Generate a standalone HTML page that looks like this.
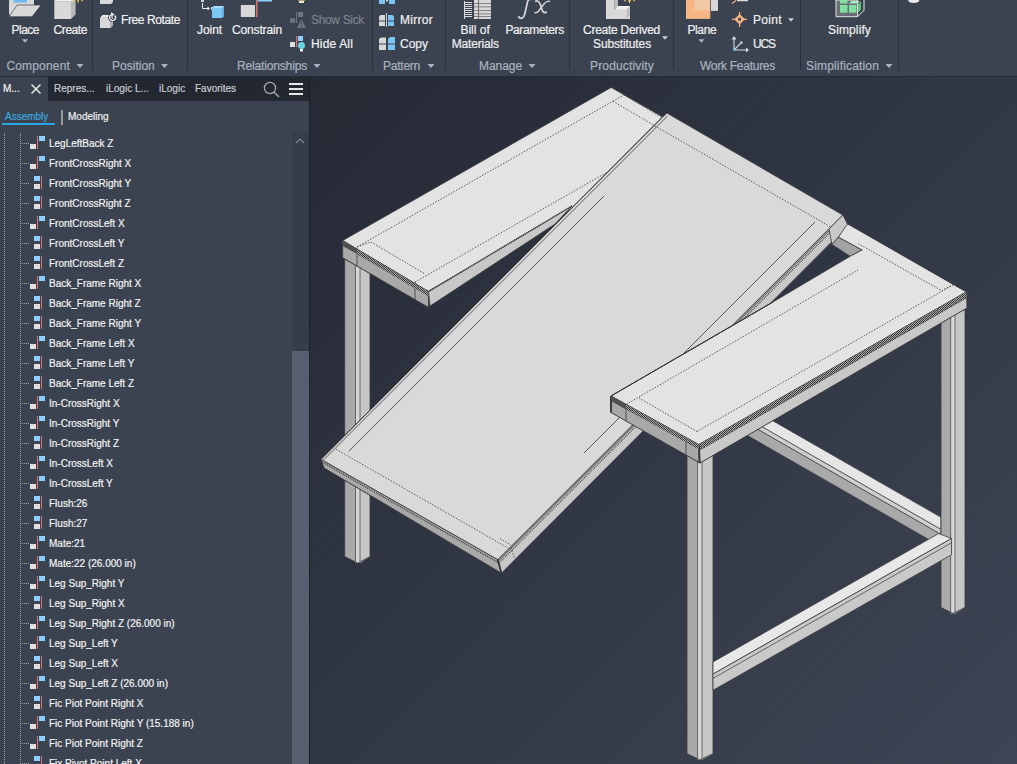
<!DOCTYPE html>
<html><head><meta charset="utf-8"><style>
html,body{margin:0;padding:0;width:1017px;height:764px;overflow:hidden;background:#3b4351;font-family:"Liberation Sans", sans-serif;}
.r{position:absolute;}
.t{position:absolute;white-space:nowrap;font-family:"Liberation Sans", sans-serif;-webkit-text-stroke:0.2px currentColor;}
</style></head><body>
<div class="r" style="left:0px;top:0px;width:1017px;height:76px;background:#3b4351;"></div><div class="r" style="left:0px;top:76px;width:1017px;height:1px;background:#262b33;"></div><div class="r" style="left:92px;top:0px;width:1px;height:70px;background:#2b313b;"></div><div class="r" style="left:187px;top:0px;width:1px;height:70px;background:#2b313b;"></div><div class="r" style="left:372px;top:0px;width:1px;height:70px;background:#2b313b;"></div><div class="r" style="left:445px;top:0px;width:1px;height:70px;background:#2b313b;"></div><div class="r" style="left:569px;top:0px;width:1px;height:70px;background:#2b313b;"></div><div class="r" style="left:673px;top:0px;width:1px;height:70px;background:#2b313b;"></div><div class="r" style="left:800px;top:0px;width:1px;height:70px;background:#2b313b;"></div><div class="r" style="left:898px;top:0px;width:1px;height:70px;background:#2b313b;"></div><div class="t" style="left:11.6px;top:23.84px;font-size:12px;line-height:12px;color:#f0f0f0;letter-spacing:-0.523px;">Place</div><div class="t" style="left:53.6px;top:23.84px;font-size:12px;line-height:12px;color:#f0f0f0;letter-spacing:-0.436px;">Create</div><div class="t" style="left:6.4px;top:59.84px;font-size:12px;line-height:12px;color:#aab2bf;letter-spacing:0.174px;">Component</div><div class="t" style="left:121px;top:13.84px;font-size:12px;line-height:12px;color:#f0f0f0;letter-spacing:-0.396px;">Free Rotate</div><div class="t" style="left:112px;top:59.84px;font-size:12px;line-height:12px;color:#aab2bf;letter-spacing:0.014px;">Position</div><div class="t" style="left:197px;top:23.84px;font-size:12px;line-height:12px;color:#f0f0f0;letter-spacing:-0.069px;">Joint</div><div class="t" style="left:232px;top:23.84px;font-size:12px;line-height:12px;color:#f0f0f0;letter-spacing:-0.150px;">Constrain</div><div class="t" style="left:311px;top:13.84px;font-size:12px;line-height:12px;color:#7b818b;letter-spacing:-0.336px;">Show Sick</div><div class="t" style="left:311px;top:37.84px;font-size:12px;line-height:12px;color:#f0f0f0;letter-spacing:0.164px;">Hide All</div><div class="t" style="left:237px;top:59.84px;font-size:12px;line-height:12px;color:#aab2bf;letter-spacing:-0.157px;">Relationships</div><div class="t" style="left:400px;top:13.84px;font-size:12px;line-height:12px;color:#f0f0f0;letter-spacing:0.280px;">Mirror</div><div class="t" style="left:400px;top:37.84px;font-size:12px;line-height:12px;color:#f0f0f0;letter-spacing:-0.003px;">Copy</div><div class="t" style="left:383px;top:59.84px;font-size:12px;line-height:12px;color:#aab2bf;letter-spacing:-0.241px;">Pattern</div><div class="t" style="left:460.4px;top:23.84px;font-size:12px;line-height:12px;color:#f0f0f0;letter-spacing:0.008px;">Bill of</div><div class="t" style="left:451.7px;top:38.44px;font-size:12px;line-height:12px;color:#f0f0f0;letter-spacing:-0.164px;">Materials</div><div class="t" style="left:505.4px;top:23.84px;font-size:12px;line-height:12px;color:#f0f0f0;letter-spacing:-0.352px;">Parameters</div><div class="t" style="left:479px;top:59.84px;font-size:12px;line-height:12px;color:#aab2bf;letter-spacing:-0.060px;">Manage</div><div class="t" style="left:583px;top:23.84px;font-size:12px;line-height:12px;color:#f0f0f0;letter-spacing:-0.264px;">Create Derived</div><div class="t" style="left:593px;top:38.44px;font-size:12px;line-height:12px;color:#f0f0f0;letter-spacing:-0.124px;">Substitutes</div><div class="t" style="left:590px;top:59.84px;font-size:12px;line-height:12px;color:#aab2bf;letter-spacing:0.165px;">Productivity</div><div class="t" style="left:687.5px;top:23.84px;font-size:12px;line-height:12px;color:#f0f0f0;letter-spacing:-0.398px;">Plane</div><div class="t" style="left:753px;top:13.84px;font-size:12px;line-height:12px;color:#f0f0f0;letter-spacing:0.330px;">Point</div><div class="t" style="left:753px;top:37.84px;font-size:12px;line-height:12px;color:#f0f0f0;letter-spacing:-1.112px;">UCS</div><div class="t" style="left:700px;top:59.84px;font-size:12px;line-height:12px;color:#aab2bf;letter-spacing:-0.266px;">Work Features</div><div class="t" style="left:828px;top:23.84px;font-size:12px;line-height:12px;color:#f0f0f0;letter-spacing:0.124px;">Simplify</div><div class="t" style="left:806px;top:59.84px;font-size:12px;line-height:12px;color:#aab2bf;letter-spacing:0.165px;">Simplification</div><svg class="r" style="left:0;top:0" width="1017" height="76"><path d="M76.5 64.0L83.5 64.0L80 68.0Z" fill="#a9b3c4"/><path d="M161.0 64.0L168.0 64.0L164.5 68.0Z" fill="#a9b3c4"/><path d="M313.5 64.0L320.5 64.0L317 68.0Z" fill="#a9b3c4"/><path d="M427.5 64.0L434.5 64.0L431 68.0Z" fill="#a9b3c4"/><path d="M528.5 64.0L535.5 64.0L532 68.0Z" fill="#a9b3c4"/><path d="M885.5 64.0L892.5 64.0L889 68.0Z" fill="#a9b3c4"/><path d="M22.0 39.25L28.0 39.25L25 42.75Z" fill="#a9b3c4"/><path d="M698.4 39.25L704.4 39.25L701.4 42.75Z" fill="#a9b3c4"/><path d="M662.0 36.25L668.0 36.25L665 39.75Z" fill="#c8ccd2"/><path d="M788.0 18.25L794.0 18.25L791 21.75Z" fill="#c8ccd2"/><rect x="9" y="0" width="25" height="14.5" fill="#d6d6d6"/><rect x="13.4" y="0" width="13.6" height="2.5" fill="#6fb8ef"/><path d="M9 16.7L17.2 5L41.2 5L32 16.7Z" fill="#d8d8d8" stroke="#2e333c" stroke-width="0.6"/><path d="M54.3 1.8L71 1.8L71 19L54.3 19Z" fill="#d8d8d8"/><path d="M71 1.8L75.6 -2L75.6 14.5L71 19Z" fill="#b8b8b8"/><path d="M54.3 0L75 0L71 1.8L54.3 1.8Z" fill="#eeeeee"/><path d="M73 0L74 3L75 0ZM77 0L78 4L79 0ZM81 0L82 2L83 0Z" fill="#e8c060"/><path d="M100 0L111 0L113 0L113 2L111 4L100 4Z" fill="#d8d8d8"/><path d="M100 17.7L102.5 15L113 15L110.7 17.7Z" fill="#ececec"/><rect x="100" y="17.7" width="10.7" height="10.3" fill="#d8d8d8"/><path d="M110.7 17.7L113 15L113 25.5L110.7 28Z" fill="#b0b0b0"/><path d="M114.8 15.5A3 3 0 1 1 112 14.6" fill="none" stroke="#3b4351" stroke-width="3"/><path d="M114.8 15.5A3 3 0 1 1 112 14.6" fill="none" stroke="#f4f4f4" stroke-width="1.3"/><path d="M111 12.3L114.5 14.2L111.5 16.5Z" fill="#f4f4f4"/><rect x="201" y="0" width="3" height="2" fill="#d0d0d0"/><path d="M202.5 3L202.5 8.5L208 8.5" fill="none" stroke="#eeeeee" stroke-width="1"/><path d="M207.5 6.5L210 8.5L207.5 10.5Z" fill="#eeeeee"/><rect x="211" y="7" width="3" height="3" fill="#cccccc"/><path d="M212 8L214 6L224 6L224 16L222 18L212 18Z" fill="#7cc6f6"/><path d="M214 6L224 6L222 8L212 8Z" fill="#a8dcfc"/><path d="M222 8L224 6L224 16L222 18Z" fill="#62acdc"/><rect x="240.8" y="5" width="14.2" height="12" fill="#d8d8d8"/><rect x="256" y="0" width="1.5" height="17" fill="#e2716b"/><rect x="257.7" y="0" width="14.2" height="1.5" fill="#8ccfff"/><rect x="299" y="0" width="5" height="3" fill="#e8e8e8"/><rect x="298" y="0" width="7" height="1" fill="#b89a58"/><rect x="290" y="18.2" width="5" height="4.7" fill="#6e737c"/><rect x="296" y="12" width="1" height="11" fill="#6e737c"/><rect x="298" y="12" width="5" height="5" fill="#6e737c"/><path d="M297 28L301.5 19L306 28Z" fill="#6e737c"/><rect x="301" y="22" width="1" height="3" fill="#3b4351"/><rect x="301" y="26" width="1" height="1" fill="#3b4351"/><rect x="290" y="42" width="5" height="5" fill="#e0e0e0"/><rect x="296" y="36" width="1.2" height="11" fill="#e2716b"/><rect x="298" y="36" width="5" height="5" fill="#8ccfff"/><circle cx="301.5" cy="45.5" r="3.5" fill="#66d4e0"/><rect x="300" y="49" width="3" height="2.5" fill="#eeeeee"/><rect x="379" y="0" width="6" height="4" fill="#7cc6f6"/><rect x="389" y="0" width="6" height="4" fill="#7cc6f6"/><rect x="386" y="0" width="2" height="1.5" fill="#e0e0e0"/><path d="M379 16.5L380.5 15L385 15L385 26L379 26Z" fill="#d8d8d8"/><rect x="379" y="20.5" width="6" height="1" fill="#3b4351"/><rect x="386" y="13" width="1" height="14" fill="#d0d0d0"/><path d="M388 15L392.5 15L394 16.5L394 26L388 26Z" fill="#7cc6f6"/><rect x="388" y="20.5" width="6" height="1" fill="#3b4351"/><path d="M379 39L381 37.5L386 37.5L386 50L379 50Z" fill="#d8d8d8"/><rect x="379" y="43.5" width="7" height="1" fill="#3b4351"/><path d="M388 39L390 37L395 37L395 50L388 50Z" fill="#7cc6f6"/><rect x="388" y="43.5" width="7" height="1" fill="#3b4351"/><rect x="464" y="1" width="1" height="18" fill="#d8d8d8"/><rect x="464" y="2" width="8" height="1" fill="#d8d8d8"/><rect x="464" y="4" width="8" height="1" fill="#d8d8d8"/><rect x="464" y="6" width="8" height="1" fill="#d8d8d8"/><rect x="464" y="8" width="8" height="1" fill="#d8d8d8"/><rect x="464" y="10" width="8" height="1" fill="#d8d8d8"/><rect x="464" y="12" width="8" height="1" fill="#d8d8d8"/><rect x="464" y="14" width="8" height="1" fill="#d8d8d8"/><rect x="464" y="16" width="8" height="1" fill="#d8d8d8"/><rect x="474" y="0" width="17" height="19" fill="#d8d8d8"/><rect x="478" y="0" width="1" height="19" fill="#6c6c6c"/><rect x="474" y="3" width="17" height="0.8" fill="#6c6c6c"/><rect x="474" y="6.5" width="17" height="0.8" fill="#6c6c6c"/><rect x="474" y="10" width="17" height="0.8" fill="#6c6c6c"/><rect x="474" y="13.5" width="17" height="0.8" fill="#6c6c6c"/><rect x="474" y="16" width="17" height="0.8" fill="#6c6c6c"/><path d="M518.5 16.2Q520 19.8 523 17.5Q524.5 16 525.5 11L527.5 2Q528.5 -1.5 531.5 -0.5" fill="none" stroke="#d6d6d6" stroke-width="1.7"/><path d="M535 1.5Q538.5 -0.5 540.5 5L542.5 11Q544 13.5 547 12" fill="none" stroke="#d6d6d6" stroke-width="1.7"/><path d="M550 1.5Q547 0 543.5 4.5L539 10.5Q537 13.5 534.5 12.5" fill="none" stroke="#d6d6d6" stroke-width="1.4"/><path d="M606 0L614.6 0L614.6 9.5L630 6L630 19L606 19Z" fill="#d8d8d8"/><path d="M614.6 0L618 0L618 6.5L614.6 9.5Z" fill="#bcbcbc"/><path d="M614.6 9.5L618 6L630 6L626.5 9.5Z" fill="#f0f0f0"/><path d="M626.5 9.5L630 6L630 15.5L626.5 19Z" fill="#c0c0c0"/><path d="M624 0L625 2L626 0ZM628 0L629.5 4L631 0ZM633 0L634 2L635 0Z" fill="#f0c060"/><rect x="686" y="0" width="24.3" height="18.9" fill="#f5b584"/><rect x="694.2" y="0" width="15.8" height="10.2" fill="#f0c8a4"/><rect x="711" y="0" width="7" height="10.9" fill="#d8d8d8"/><path d="M732 3.5L736 0.5" stroke="#f5b584" stroke-width="1.2"/><rect x="737" y="0" width="11" height="1.2" fill="#e0e0e0"/><path d="M739.6 14L745 19.3L739.6 24.6L734.2 19.3Z" fill="#f5b584"/><path d="M732 19.3L747 19.3M739.6 12L739.6 27" stroke="#f5b584" stroke-width="1.2"/><rect x="738.2" y="17.9" width="2.8" height="2.8" fill="#3b4351"/><path d="M734 50L734 38M734 50L747 50M734 50L741 43" stroke="#d8d8d8" stroke-width="1.1" fill="none"/><path d="M731.5 39.5L734 36L736.5 39.5Z M746 47.5L749 50L746 52.5Z M739.5 41.5L742.5 41.5L742.5 44.5Z" fill="#d8d8d8"/><rect x="733" y="49" width="2" height="2" fill="#52b4f0"/><path d="M836 0L857.5 0L857.5 16.7L836 16.7Z" fill="#696d75" stroke="#e4e4e4" stroke-width="1"/><path d="M857.5 16.7L864 10.5L864 0" fill="none" stroke="#e4e4e4" stroke-width="1"/><rect x="840" y="0" width="7.5" height="3.5" fill="#80e0a2"/><rect x="840" y="5" width="7.5" height="7.7" fill="#80e0a2"/><rect x="849" y="5" width="7.3" height="7.7" fill="#80e0a2"/><path d="M849 3.5L851.5 1L860 1L857.5 3.5Z" fill="#a8ecbf"/><path d="M858 4L861 1.5L861 10L858 12.5Z" fill="#5cc07e"/><path d="M908 0L919.5 0A5.8 3.5 0 0 1 908 0Z" fill="#e8e8e8"/></svg><div class="r" style="left:0px;top:77px;width:309px;height:687px;background:#3b4351;"></div><div class="r" style="left:48px;top:77px;width:261px;height:24px;background:#222730;"></div><div class="r" style="left:309px;top:77px;width:1px;height:687px;background:#1c2027;"></div><div class="t" style="left:3px;top:83.53px;font-size:10px;line-height:10px;color:#f0f0f0;">M...</div><svg class="r" style="left:30px;top:83px" width="12" height="12"><path d="M1.5 1.5L10.5 10.5M10.5 1.5L1.5 10.5" stroke="#e8e8e8" stroke-width="1.5"/></svg><div class="t" style="left:54px;top:83.53px;font-size:10px;line-height:10px;color:#c8ccd2;">Repres...</div><div class="t" style="left:106px;top:83.53px;font-size:10px;line-height:10px;color:#c8ccd2;">iLogic L...</div><div class="t" style="left:159px;top:83.53px;font-size:10px;line-height:10px;color:#c8ccd2;">iLogic</div><div class="t" style="left:195px;top:83.53px;font-size:10px;line-height:10px;color:#c8ccd2;">Favorites</div><svg class="r" style="left:262px;top:80px" width="18" height="18"><circle cx="8" cy="8" r="5.6" fill="none" stroke="#a8a8a8" stroke-width="1.3"/><path d="M12 12L17 17" stroke="#a8a8a8" stroke-width="1.4"/></svg><div class="r" style="left:289px;top:83px;width:14px;height:2px;background:#e6e6e6;"></div><div class="r" style="left:289px;top:88px;width:14px;height:2px;background:#e6e6e6;"></div><div class="r" style="left:289px;top:93px;width:14px;height:2px;background:#e6e6e6;"></div><div class="t" style="left:5px;top:111.53px;font-size:10px;line-height:10px;color:#3aa6de;">Assembly</div><div class="r" style="left:2px;top:123px;width:53px;height:2px;background:#2aa6e0;"></div><div class="r" style="left:61px;top:110px;width:2px;height:15px;background:#9a9a9a;"></div><div class="t" style="left:68px;top:111.53px;font-size:10px;line-height:10px;color:#f0f0f0;">Modeling</div><div class="r" style="left:292px;top:133px;width:17px;height:631px;background:#363c49;"></div><div class="r" style="left:292px;top:351px;width:17px;height:413px;background:#586070;"></div><svg class="r" style="left:294px;top:136px" width="12" height="10"><path d="M2 7L6 3L10 7" fill="none" stroke="#7d8594" stroke-width="1.2"/></svg><div class="r" style="left:4px;top:133px;width:1px;height:631px;background:repeating-linear-gradient(#a4a4a4 0 1px, transparent 1px 2px)"></div><div class="r" style="left:20px;top:133px;width:1px;height:631px;background:repeating-linear-gradient(#a4a4a4 0 1px, transparent 1px 2px)"></div><div class="r" style="left:22px;top:143px;width:7px;height:1px;background:repeating-linear-gradient(90deg,#a4a4a4 0 1px, transparent 1px 2px)"></div><div class="r" style="left:30px;top:144px;width:6px;height:5px;background:#e0e0e0;"></div><div class="r" style="left:37px;top:136px;width:1px;height:13px;background:#e2716b;"></div><div class="r" style="left:39px;top:136px;width:6px;height:5px;background:#8ccfff;"></div><div class="t" style="left:49px;top:139.03px;font-size:10px;line-height:10px;color:#f2f2f2;">LegLeftBack Z</div><div class="r" style="left:22px;top:163px;width:7px;height:1px;background:repeating-linear-gradient(90deg,#a4a4a4 0 1px, transparent 1px 2px)"></div><div class="r" style="left:30px;top:164px;width:6px;height:5px;background:#e0e0e0;"></div><div class="r" style="left:37px;top:156px;width:1px;height:13px;background:#e2716b;"></div><div class="r" style="left:39px;top:156px;width:6px;height:5px;background:#8ccfff;"></div><div class="t" style="left:49px;top:159.03px;font-size:10px;line-height:10px;color:#f2f2f2;">FrontCrossRight X</div><div class="r" style="left:22px;top:183px;width:7px;height:1px;background:repeating-linear-gradient(90deg,#a4a4a4 0 1px, transparent 1px 2px)"></div><div class="r" style="left:34px;top:176px;width:6px;height:5px;background:#8ccfff;"></div><div class="r" style="left:34px;top:184px;width:6px;height:5px;background:#e0e0e0;"></div><div class="r" style="left:41px;top:176px;width:1px;height:13px;background:#e2716b;"></div><div class="t" style="left:49px;top:179.03px;font-size:10px;line-height:10px;color:#f2f2f2;">FrontCrossRight Y</div><div class="r" style="left:22px;top:203px;width:7px;height:1px;background:repeating-linear-gradient(90deg,#a4a4a4 0 1px, transparent 1px 2px)"></div><div class="r" style="left:34px;top:196px;width:6px;height:5px;background:#8ccfff;"></div><div class="r" style="left:34px;top:204px;width:6px;height:5px;background:#e0e0e0;"></div><div class="r" style="left:41px;top:196px;width:1px;height:13px;background:#e2716b;"></div><div class="t" style="left:49px;top:199.03px;font-size:10px;line-height:10px;color:#f2f2f2;">FrontCrossRight Z</div><div class="r" style="left:22px;top:223px;width:7px;height:1px;background:repeating-linear-gradient(90deg,#a4a4a4 0 1px, transparent 1px 2px)"></div><div class="r" style="left:30px;top:224px;width:6px;height:5px;background:#e0e0e0;"></div><div class="r" style="left:37px;top:216px;width:1px;height:13px;background:#e2716b;"></div><div class="r" style="left:39px;top:216px;width:6px;height:5px;background:#8ccfff;"></div><div class="t" style="left:49px;top:219.03px;font-size:10px;line-height:10px;color:#f2f2f2;">FrontCrossLeft X</div><div class="r" style="left:22px;top:243px;width:7px;height:1px;background:repeating-linear-gradient(90deg,#a4a4a4 0 1px, transparent 1px 2px)"></div><div class="r" style="left:34px;top:236px;width:6px;height:5px;background:#8ccfff;"></div><div class="r" style="left:34px;top:244px;width:6px;height:5px;background:#e0e0e0;"></div><div class="r" style="left:41px;top:236px;width:1px;height:13px;background:#e2716b;"></div><div class="t" style="left:49px;top:239.03px;font-size:10px;line-height:10px;color:#f2f2f2;">FrontCrossLeft Y</div><div class="r" style="left:22px;top:263px;width:7px;height:1px;background:repeating-linear-gradient(90deg,#a4a4a4 0 1px, transparent 1px 2px)"></div><div class="r" style="left:34px;top:256px;width:6px;height:5px;background:#8ccfff;"></div><div class="r" style="left:34px;top:264px;width:6px;height:5px;background:#e0e0e0;"></div><div class="r" style="left:41px;top:256px;width:1px;height:13px;background:#e2716b;"></div><div class="t" style="left:49px;top:259.04px;font-size:10px;line-height:10px;color:#f2f2f2;">FrontCrossLeft Z</div><div class="r" style="left:22px;top:283px;width:7px;height:1px;background:repeating-linear-gradient(90deg,#a4a4a4 0 1px, transparent 1px 2px)"></div><div class="r" style="left:30px;top:284px;width:6px;height:5px;background:#e0e0e0;"></div><div class="r" style="left:37px;top:276px;width:1px;height:13px;background:#e2716b;"></div><div class="r" style="left:39px;top:276px;width:6px;height:5px;background:#8ccfff;"></div><div class="t" style="left:49px;top:279.04px;font-size:10px;line-height:10px;color:#f2f2f2;">Back_Frame Right X</div><div class="r" style="left:22px;top:303px;width:7px;height:1px;background:repeating-linear-gradient(90deg,#a4a4a4 0 1px, transparent 1px 2px)"></div><div class="r" style="left:34px;top:296px;width:6px;height:5px;background:#8ccfff;"></div><div class="r" style="left:34px;top:304px;width:6px;height:5px;background:#e0e0e0;"></div><div class="r" style="left:41px;top:296px;width:1px;height:13px;background:#e2716b;"></div><div class="t" style="left:49px;top:299.04px;font-size:10px;line-height:10px;color:#f2f2f2;">Back_Frame Right Z</div><div class="r" style="left:22px;top:323px;width:7px;height:1px;background:repeating-linear-gradient(90deg,#a4a4a4 0 1px, transparent 1px 2px)"></div><div class="r" style="left:34px;top:316px;width:6px;height:5px;background:#8ccfff;"></div><div class="r" style="left:34px;top:324px;width:6px;height:5px;background:#e0e0e0;"></div><div class="r" style="left:41px;top:316px;width:1px;height:13px;background:#e2716b;"></div><div class="t" style="left:49px;top:319.04px;font-size:10px;line-height:10px;color:#f2f2f2;">Back_Frame Right Y</div><div class="r" style="left:22px;top:343px;width:7px;height:1px;background:repeating-linear-gradient(90deg,#a4a4a4 0 1px, transparent 1px 2px)"></div><div class="r" style="left:30px;top:344px;width:6px;height:5px;background:#e0e0e0;"></div><div class="r" style="left:37px;top:336px;width:1px;height:13px;background:#e2716b;"></div><div class="r" style="left:39px;top:336px;width:6px;height:5px;background:#8ccfff;"></div><div class="t" style="left:49px;top:339.04px;font-size:10px;line-height:10px;color:#f2f2f2;">Back_Frame Left X</div><div class="r" style="left:22px;top:363px;width:7px;height:1px;background:repeating-linear-gradient(90deg,#a4a4a4 0 1px, transparent 1px 2px)"></div><div class="r" style="left:34px;top:356px;width:6px;height:5px;background:#8ccfff;"></div><div class="r" style="left:34px;top:364px;width:6px;height:5px;background:#e0e0e0;"></div><div class="r" style="left:41px;top:356px;width:1px;height:13px;background:#e2716b;"></div><div class="t" style="left:49px;top:359.04px;font-size:10px;line-height:10px;color:#f2f2f2;">Back_Frame Left Y</div><div class="r" style="left:22px;top:383px;width:7px;height:1px;background:repeating-linear-gradient(90deg,#a4a4a4 0 1px, transparent 1px 2px)"></div><div class="r" style="left:34px;top:376px;width:6px;height:5px;background:#8ccfff;"></div><div class="r" style="left:34px;top:384px;width:6px;height:5px;background:#e0e0e0;"></div><div class="r" style="left:41px;top:376px;width:1px;height:13px;background:#e2716b;"></div><div class="t" style="left:49px;top:379.04px;font-size:10px;line-height:10px;color:#f2f2f2;">Back_Frame Left Z</div><div class="r" style="left:22px;top:403px;width:7px;height:1px;background:repeating-linear-gradient(90deg,#a4a4a4 0 1px, transparent 1px 2px)"></div><div class="r" style="left:30px;top:404px;width:6px;height:5px;background:#e0e0e0;"></div><div class="r" style="left:37px;top:396px;width:1px;height:13px;background:#e2716b;"></div><div class="r" style="left:39px;top:396px;width:6px;height:5px;background:#8ccfff;"></div><div class="t" style="left:49px;top:399.04px;font-size:10px;line-height:10px;color:#f2f2f2;">In-CrossRight X</div><div class="r" style="left:22px;top:423px;width:7px;height:1px;background:repeating-linear-gradient(90deg,#a4a4a4 0 1px, transparent 1px 2px)"></div><div class="r" style="left:30px;top:424px;width:6px;height:5px;background:#e0e0e0;"></div><div class="r" style="left:37px;top:416px;width:1px;height:13px;background:#e2716b;"></div><div class="r" style="left:39px;top:416px;width:6px;height:5px;background:#8ccfff;"></div><div class="t" style="left:49px;top:419.04px;font-size:10px;line-height:10px;color:#f2f2f2;">In-CrossRight Y</div><div class="r" style="left:22px;top:443px;width:7px;height:1px;background:repeating-linear-gradient(90deg,#a4a4a4 0 1px, transparent 1px 2px)"></div><div class="r" style="left:34px;top:436px;width:6px;height:5px;background:#8ccfff;"></div><div class="r" style="left:34px;top:444px;width:6px;height:5px;background:#e0e0e0;"></div><div class="r" style="left:41px;top:436px;width:1px;height:13px;background:#e2716b;"></div><div class="t" style="left:49px;top:439.04px;font-size:10px;line-height:10px;color:#f2f2f2;">In-CrossRight Z</div><div class="r" style="left:22px;top:463px;width:7px;height:1px;background:repeating-linear-gradient(90deg,#a4a4a4 0 1px, transparent 1px 2px)"></div><div class="r" style="left:30px;top:464px;width:6px;height:5px;background:#e0e0e0;"></div><div class="r" style="left:37px;top:456px;width:1px;height:13px;background:#e2716b;"></div><div class="r" style="left:39px;top:456px;width:6px;height:5px;background:#8ccfff;"></div><div class="t" style="left:49px;top:459.04px;font-size:10px;line-height:10px;color:#f2f2f2;">In-CrossLeft X</div><div class="r" style="left:22px;top:483px;width:7px;height:1px;background:repeating-linear-gradient(90deg,#a4a4a4 0 1px, transparent 1px 2px)"></div><div class="r" style="left:30px;top:484px;width:6px;height:5px;background:#e0e0e0;"></div><div class="r" style="left:37px;top:476px;width:1px;height:13px;background:#e2716b;"></div><div class="r" style="left:39px;top:476px;width:6px;height:5px;background:#8ccfff;"></div><div class="t" style="left:49px;top:479.04px;font-size:10px;line-height:10px;color:#f2f2f2;">In-CrossLeft Y</div><div class="r" style="left:22px;top:503px;width:7px;height:1px;background:repeating-linear-gradient(90deg,#a4a4a4 0 1px, transparent 1px 2px)"></div><div class="r" style="left:34px;top:496px;width:6px;height:5px;background:#8ccfff;"></div><div class="r" style="left:34px;top:504px;width:6px;height:5px;background:#e0e0e0;"></div><div class="r" style="left:41px;top:496px;width:1px;height:13px;background:#e2716b;"></div><div class="t" style="left:49px;top:499.04px;font-size:10px;line-height:10px;color:#f2f2f2;">Flush:26</div><div class="r" style="left:22px;top:523px;width:7px;height:1px;background:repeating-linear-gradient(90deg,#a4a4a4 0 1px, transparent 1px 2px)"></div><div class="r" style="left:34px;top:516px;width:6px;height:5px;background:#8ccfff;"></div><div class="r" style="left:34px;top:524px;width:6px;height:5px;background:#e0e0e0;"></div><div class="r" style="left:41px;top:516px;width:1px;height:13px;background:#e2716b;"></div><div class="t" style="left:49px;top:519.03px;font-size:10px;line-height:10px;color:#f2f2f2;">Flush:27</div><div class="r" style="left:22px;top:543px;width:7px;height:1px;background:repeating-linear-gradient(90deg,#a4a4a4 0 1px, transparent 1px 2px)"></div><div class="r" style="left:30px;top:544px;width:6px;height:5px;background:#e0e0e0;"></div><div class="r" style="left:37px;top:536px;width:1px;height:13px;background:#e2716b;"></div><div class="r" style="left:39px;top:536px;width:6px;height:5px;background:#8ccfff;"></div><div class="t" style="left:49px;top:539.03px;font-size:10px;line-height:10px;color:#f2f2f2;">Mate:21</div><div class="r" style="left:22px;top:563px;width:7px;height:1px;background:repeating-linear-gradient(90deg,#a4a4a4 0 1px, transparent 1px 2px)"></div><div class="r" style="left:30px;top:564px;width:6px;height:5px;background:#e0e0e0;"></div><div class="r" style="left:37px;top:556px;width:1px;height:13px;background:#e2716b;"></div><div class="r" style="left:39px;top:556px;width:6px;height:5px;background:#8ccfff;"></div><div class="t" style="left:49px;top:559.03px;font-size:10px;line-height:10px;color:#f2f2f2;">Mate:22 (26.000 in)</div><div class="r" style="left:22px;top:583px;width:7px;height:1px;background:repeating-linear-gradient(90deg,#a4a4a4 0 1px, transparent 1px 2px)"></div><div class="r" style="left:30px;top:584px;width:6px;height:5px;background:#e0e0e0;"></div><div class="r" style="left:37px;top:576px;width:1px;height:13px;background:#e2716b;"></div><div class="r" style="left:39px;top:576px;width:6px;height:5px;background:#8ccfff;"></div><div class="t" style="left:49px;top:579.03px;font-size:10px;line-height:10px;color:#f2f2f2;">Leg Sup_Right Y</div><div class="r" style="left:22px;top:603px;width:7px;height:1px;background:repeating-linear-gradient(90deg,#a4a4a4 0 1px, transparent 1px 2px)"></div><div class="r" style="left:34px;top:596px;width:6px;height:5px;background:#8ccfff;"></div><div class="r" style="left:34px;top:604px;width:6px;height:5px;background:#e0e0e0;"></div><div class="r" style="left:41px;top:596px;width:1px;height:13px;background:#e2716b;"></div><div class="t" style="left:49px;top:599.03px;font-size:10px;line-height:10px;color:#f2f2f2;">Leg Sup_Right X</div><div class="r" style="left:22px;top:623px;width:7px;height:1px;background:repeating-linear-gradient(90deg,#a4a4a4 0 1px, transparent 1px 2px)"></div><div class="r" style="left:30px;top:624px;width:6px;height:5px;background:#e0e0e0;"></div><div class="r" style="left:37px;top:616px;width:1px;height:13px;background:#e2716b;"></div><div class="r" style="left:39px;top:616px;width:6px;height:5px;background:#8ccfff;"></div><div class="t" style="left:49px;top:619.03px;font-size:10px;line-height:10px;color:#f2f2f2;">Leg Sup_Right Z (26.000 in)</div><div class="r" style="left:22px;top:643px;width:7px;height:1px;background:repeating-linear-gradient(90deg,#a4a4a4 0 1px, transparent 1px 2px)"></div><div class="r" style="left:30px;top:644px;width:6px;height:5px;background:#e0e0e0;"></div><div class="r" style="left:37px;top:636px;width:1px;height:13px;background:#e2716b;"></div><div class="r" style="left:39px;top:636px;width:6px;height:5px;background:#8ccfff;"></div><div class="t" style="left:49px;top:639.03px;font-size:10px;line-height:10px;color:#f2f2f2;">Leg Sup_Left Y</div><div class="r" style="left:22px;top:663px;width:7px;height:1px;background:repeating-linear-gradient(90deg,#a4a4a4 0 1px, transparent 1px 2px)"></div><div class="r" style="left:34px;top:656px;width:6px;height:5px;background:#8ccfff;"></div><div class="r" style="left:34px;top:664px;width:6px;height:5px;background:#e0e0e0;"></div><div class="r" style="left:41px;top:656px;width:1px;height:13px;background:#e2716b;"></div><div class="t" style="left:49px;top:659.03px;font-size:10px;line-height:10px;color:#f2f2f2;">Leg Sup_Left X</div><div class="r" style="left:22px;top:683px;width:7px;height:1px;background:repeating-linear-gradient(90deg,#a4a4a4 0 1px, transparent 1px 2px)"></div><div class="r" style="left:30px;top:684px;width:6px;height:5px;background:#e0e0e0;"></div><div class="r" style="left:37px;top:676px;width:1px;height:13px;background:#e2716b;"></div><div class="r" style="left:39px;top:676px;width:6px;height:5px;background:#8ccfff;"></div><div class="t" style="left:49px;top:679.03px;font-size:10px;line-height:10px;color:#f2f2f2;">Leg Sup_Left Z (26.000 in)</div><div class="r" style="left:22px;top:703px;width:7px;height:1px;background:repeating-linear-gradient(90deg,#a4a4a4 0 1px, transparent 1px 2px)"></div><div class="r" style="left:34px;top:696px;width:6px;height:5px;background:#8ccfff;"></div><div class="r" style="left:34px;top:704px;width:6px;height:5px;background:#e0e0e0;"></div><div class="r" style="left:41px;top:696px;width:1px;height:13px;background:#e2716b;"></div><div class="t" style="left:49px;top:699.03px;font-size:10px;line-height:10px;color:#f2f2f2;">Fic Piot Point Right X</div><div class="r" style="left:22px;top:723px;width:7px;height:1px;background:repeating-linear-gradient(90deg,#a4a4a4 0 1px, transparent 1px 2px)"></div><div class="r" style="left:30px;top:724px;width:6px;height:5px;background:#e0e0e0;"></div><div class="r" style="left:37px;top:716px;width:1px;height:13px;background:#e2716b;"></div><div class="r" style="left:39px;top:716px;width:6px;height:5px;background:#8ccfff;"></div><div class="t" style="left:49px;top:719.03px;font-size:10px;line-height:10px;color:#f2f2f2;">Fic Piot Point Right Y (15.188 in)</div><div class="r" style="left:22px;top:743px;width:7px;height:1px;background:repeating-linear-gradient(90deg,#a4a4a4 0 1px, transparent 1px 2px)"></div><div class="r" style="left:30px;top:744px;width:6px;height:5px;background:#e0e0e0;"></div><div class="r" style="left:37px;top:736px;width:1px;height:13px;background:#e2716b;"></div><div class="r" style="left:39px;top:736px;width:6px;height:5px;background:#8ccfff;"></div><div class="t" style="left:49px;top:739.03px;font-size:10px;line-height:10px;color:#f2f2f2;">Fic Piot Point Right Z</div><div class="r" style="left:22px;top:763px;width:7px;height:1px;background:repeating-linear-gradient(90deg,#a4a4a4 0 1px, transparent 1px 2px)"></div><div class="r" style="left:34px;top:756px;width:6px;height:5px;background:#8ccfff;"></div><div class="r" style="left:34px;top:764px;width:6px;height:5px;background:#e0e0e0;"></div><div class="r" style="left:41px;top:756px;width:1px;height:13px;background:#e2716b;"></div><div class="t" style="left:49px;top:759.03px;font-size:10px;line-height:10px;color:#f2f2f2;">Fix Pivot Point Left X</div><div class="r" style="left:310px;top:77px;width:707px;height:687px;background:linear-gradient(135deg,#242934 0%,#313744 50%,#3e4453 100%)"></div><svg class="r" style="left:0;top:0" width="1017" height="764"><defs><pattern id="h" width="2" height="2" patternUnits="userSpaceOnUse"><rect width="2" height="2" fill="#a8a8a8"/><rect width="1" height="1" fill="#3a3a3a"/><rect x="1" y="1" width="1" height="1" fill="#3a3a3a"/></pattern></defs><polygon points="941.0,300.0 950.7,300.0 950.7,612.3 941.0,607.5" fill="#a9a9a9"  /><polygon points="950.7,300.0 955.0,300.0 955.0,613.4 950.7,613.4" fill="#d6d6d6"  /><polygon points="955.0,300.0 965.0,300.0 965.0,607.5 955.0,613.4" fill="#c6c6c6"  /><polygon points="941.0,300.0 965.0,300.0 965.0,607.5 952.9,613.4 941.0,607.5" fill="none" stroke="#3a3a3a" stroke-width="0.8" stroke-linejoin="round" /><line x1="950.7" y1="300.0" x2="950.7" y2="612.9" stroke="#555" stroke-width="0.8" /><line x1="955.0" y1="300.0" x2="955.0" y2="612.9" stroke="#505050" stroke-width="0.8" /><polygon points="344.7,256.0 355.5,256.0 355.5,561.9 344.7,556.6" fill="#a9a9a9"  /><polygon points="355.5,256.0 360.0,256.0 360.0,563.0 355.5,563.0" fill="#d6d6d6"  /><polygon points="360.0,256.0 370.0,256.0 370.0,556.6 360.0,563.0" fill="#c6c6c6"  /><polygon points="344.7,256.0 370.0,256.0 370.0,556.6 357.8,563.0 344.7,556.6" fill="none" stroke="#3a3a3a" stroke-width="0.8" stroke-linejoin="round" /><line x1="355.5" y1="256.0" x2="355.5" y2="562.5" stroke="#555" stroke-width="0.8" /><line x1="360.0" y1="256.0" x2="360.0" y2="562.5" stroke="#505050" stroke-width="0.8" /><polygon points="735.0,399.2 940.3,517.0 940.3,529.0 735.0,411.2" fill="#e6e6e6"  /><polygon points="735.0,411.2 940.3,529.0 940.3,534.0 735.0,416.2" fill="#cfcfcf"  /><polygon points="735.0,416.2 940.3,534.0 940.3,546.0 735.0,428.2" fill="#a9a9a9"  /><line x1="735.0" y1="399.2" x2="940.3" y2="517.0" stroke="#3a3a3a" stroke-width="0.9" stroke-dasharray="1 1"/><line x1="735.0" y1="411.2" x2="940.3" y2="529.0" stroke="#3a3a3a" stroke-width="0.8" /><line x1="735.0" y1="416.2" x2="940.3" y2="534.0" stroke="#3a3a3a" stroke-width="0.8" /><line x1="735.0" y1="428.2" x2="940.3" y2="546.0" stroke="#3a3a3a" stroke-width="0.9" stroke-dasharray="1 1"/><polygon points="687.0,455.0 697.5,455.0 697.5,758.7 687.0,753.7" fill="#a9a9a9"  /><polygon points="697.5,455.0 702.0,455.0 702.0,759.8 697.5,759.8" fill="#d6d6d6"  /><polygon points="702.0,455.0 713.0,455.0 713.0,753.7 702.0,759.8" fill="#c6c6c6"  /><polygon points="687.0,455.0 713.0,455.0 713.0,753.7 699.8,759.8 687.0,753.7" fill="none" stroke="#3a3a3a" stroke-width="0.8" stroke-linejoin="round" /><line x1="697.5" y1="455.0" x2="697.5" y2="759.3" stroke="#555" stroke-width="0.8" /><line x1="702.0" y1="455.0" x2="702.0" y2="759.3" stroke="#505050" stroke-width="0.8" /><polygon points="713.0,661.9 938.7,533.6 951.5,538.5 713.0,674.1" fill="#e8e8e8" stroke="#3a3a3a" stroke-width="0.8" stroke-linejoin="round" /><polygon points="713.0,674.1 951.5,538.5 951.5,554.7 713.0,690.3" fill="#c9c9c9" stroke="#3a3a3a" stroke-width="0.8" stroke-linejoin="round" /><line x1="713.0" y1="678.4" x2="951.5" y2="542.8" stroke="#3a3a3a" stroke-width="0.7" /><polygon points="342.7,240.6 611.2,87.4 697.0,136.5 428.5,291.5" fill="#e3e3e3" stroke="#3a3a3a" stroke-width="0.8" stroke-linejoin="round" /><polygon points="342.7,240.6 428.5,291.5 428.5,307.5 342.7,257.8" fill="#a9a9a9" stroke="#3a3a3a" stroke-width="0.8" stroke-linejoin="round" /><polygon points="428.5,291.5 572.0,206.0 555.0,224.0 430.0,306.0" fill="#c8c8c8" stroke="#3a3a3a" stroke-width="0.8" stroke-linejoin="round" /><line x1="357.0" y1="248.5" x2="357.0" y2="266.0" stroke="#3a3a3a" stroke-width="0.8" /><line x1="415.0" y1="282.0" x2="415.0" y2="299.5" stroke="#3a3a3a" stroke-width="0.8" /><polygon points="357.0,249.3 428.5,291.5 428.5,296.5 357.0,254.3" fill="url(#h)"  /><polygon points="342.7,240.6 357.0,249.3 357.0,254.0 342.7,246.0" fill="#505050"  /><line x1="342.7" y1="257.8" x2="428.5" y2="307.5" stroke="#3a3a3a" stroke-width="1.0" stroke-dasharray="1 1"/><line x1="428.5" y1="291.5" x2="572.0" y2="206.0" stroke="#3a3a3a" stroke-width="1.6" stroke-dasharray="1 1"/><line x1="357.0" y1="247.0" x2="612.8" y2="101.2" stroke="#3a3a3a" stroke-width="0.8" stroke-dasharray="1.5 1.5"/><line x1="612.8" y1="101.2" x2="662.0" y2="130.0" stroke="#3a3a3a" stroke-width="0.8" stroke-dasharray="1.5 1.5"/><line x1="612.8" y1="101.2" x2="623.8" y2="95.0" stroke="#3a3a3a" stroke-width="0.8" stroke-dasharray="1.5 1.5"/><line x1="415.0" y1="282.0" x2="660.0" y2="142.0" stroke="#3a3a3a" stroke-width="0.8" stroke-dasharray="1.5 1.5"/><line x1="357.0" y1="247.0" x2="371.0" y2="242.0" stroke="#3a3a3a" stroke-width="0.8" stroke-dasharray="1.5 1.5"/><line x1="371.0" y1="242.0" x2="425.0" y2="274.0" stroke="#3a3a3a" stroke-width="0.8" stroke-dasharray="1.5 1.5"/><line x1="623.8" y1="95.0" x2="662.0" y2="117.5" stroke="#3a3a3a" stroke-width="0.8" stroke-dasharray="1.5 1.5"/><polygon points="321.0,459.3 497.8,559.6 501.4,573.2 324.0,468.0" fill="#a9a9a9" stroke="#3a3a3a" stroke-width="0.8" stroke-linejoin="round" /><polygon points="497.8,559.6 842.8,215.0 847.0,226.5 501.4,573.2" fill="#c8c8c8" stroke="#3a3a3a" stroke-width="0.8" stroke-linejoin="round" /><line x1="498.3" y1="561.1" x2="843.3" y2="216.5" stroke="#3a3a3a" stroke-width="1.0" /><line x1="499.3" y1="562.8" x2="844.3" y2="218.2" stroke="#3a3a3a" stroke-width="1.2" stroke-dasharray="1 1"/><polygon points="321.0,459.3 666.7,112.9 842.8,215.0 497.8,559.6" fill="#d9d9d9" stroke="#3a3a3a" stroke-width="0.8" stroke-linejoin="round" /><line x1="336.0" y1="449.3" x2="508.0" y2="548.0" stroke="#3a3a3a" stroke-width="0.8" stroke-dasharray="1.5 1.5"/><line x1="654.7" y1="125.9" x2="830.8" y2="227.0" stroke="#3a3a3a" stroke-width="0.8" stroke-dasharray="1.5 1.5"/><line x1="348.7" y1="451.4" x2="604.0" y2="196.0" stroke="#3a3a3a" stroke-width="0.8" /><line x1="323.5" y1="460.0" x2="667.5" y2="116.0" stroke="#3a3a3a" stroke-width="0.8" /><line x1="321.0" y1="459.3" x2="666.7" y2="112.9" stroke="#3a3a3a" stroke-width="1.0" /><line x1="584.0" y1="453.0" x2="815.0" y2="222.0" stroke="#3a3a3a" stroke-width="0.8" /><line x1="322.0" y1="462.0" x2="499.0" y2="563.0" stroke="#3a3a3a" stroke-width="1.4" stroke-dasharray="1 1"/><line x1="500.0" y1="538.6" x2="510.9" y2="545.0" stroke="#3a3a3a" stroke-width="0.8" stroke-dasharray="1.5 1.5"/><line x1="510.9" y1="547.5" x2="514.7" y2="559.0" stroke="#3a3a3a" stroke-width="0.8" stroke-dasharray="1.5 1.5"/><line x1="497.8" y1="559.6" x2="501.4" y2="573.2" stroke="#3a3a3a" stroke-width="1.8" /><line x1="324.0" y1="468.0" x2="501.4" y2="573.2" stroke="#3a3a3a" stroke-width="1.0" stroke-dasharray="1 1"/><polygon points="773.0,302.0 831.9,244.4 850.2,256.3" fill="#2f3542"  /><polygon points="831.9,244.4 838.3,237.1 862.2,249.9 850.2,256.3" fill="#a3a3a3" stroke="#3a3a3a" stroke-width="0.8" stroke-linejoin="round" /><polygon points="611.0,396.0 773.0,302.0 850.2,256.3 862.2,249.9 838.3,237.1 846.6,223.3 966.4,291.9 698.8,444.6" fill="#e3e3e3" stroke="#3a3a3a" stroke-width="0.8" stroke-linejoin="round" /><polygon points="611.0,396.0 698.8,444.6 700.0,463.0 611.0,412.5" fill="#a9a9a9" stroke="#3a3a3a" stroke-width="0.8" stroke-linejoin="round" /><polygon points="698.8,444.6 966.4,291.9 967.0,308.0 700.0,463.0" fill="#c8c8c8" stroke="#3a3a3a" stroke-width="0.8" stroke-linejoin="round" /><polygon points="698.8,444.6 966.4,291.9 966.6,297.9 699.0,450.6" fill="url(#h)"  /><line x1="699.0" y1="450.6" x2="966.6" y2="297.9" stroke="#3a3a3a" stroke-width="1.0" stroke-dasharray="1 1"/><line x1="611.0" y1="396.0" x2="611.0" y2="412.5" stroke="#3a3a3a" stroke-width="2" /><line x1="699.0" y1="444.6" x2="699.5" y2="463.0" stroke="#3a3a3a" stroke-width="2" /><line x1="626.0" y1="404.5" x2="626.0" y2="421.0" stroke="#3a3a3a" stroke-width="0.8" /><line x1="686.0" y1="438.0" x2="686.0" y2="455.0" stroke="#3a3a3a" stroke-width="0.8" /><polygon points="626.0,404.5 698.8,444.6 698.8,449.6 626.0,409.5" fill="url(#h)"  /><polygon points="611.0,396.0 626.0,404.5 626.0,409.5 611.0,401.0" fill="#505050"  /><line x1="700.0" y1="463.0" x2="967.0" y2="308.0" stroke="#3a3a3a" stroke-width="0.8" stroke-dasharray="1 1"/><line x1="611.0" y1="412.5" x2="700.0" y2="463.0" stroke="#3a3a3a" stroke-width="0.8" stroke-dasharray="1 1"/><line x1="626.0" y1="404.5" x2="858.0" y2="270.0" stroke="#3a3a3a" stroke-width="0.8" stroke-dasharray="1.5 1.5"/><line x1="697.0" y1="431.5" x2="953.3" y2="284.7" stroke="#3a3a3a" stroke-width="0.8" stroke-dasharray="1.5 1.5"/><line x1="639.0" y1="398.0" x2="697.0" y2="431.5" stroke="#3a3a3a" stroke-width="0.8" stroke-dasharray="1.5 1.5"/><line x1="858.0" y1="243.5" x2="941.5" y2="290.6" stroke="#3a3a3a" stroke-width="0.8" stroke-dasharray="1.5 1.5"/><line x1="941.5" y1="290.6" x2="953.3" y2="284.7" stroke="#3a3a3a" stroke-width="0.8" stroke-dasharray="1.5 1.5"/><polygon points="829.0,229.0 842.8,215.0 847.5,224.0 838.3,237.1 831.9,244.4" fill="#c9c9c9" stroke="#3a3a3a" stroke-width="0.8" stroke-linejoin="round" /><polygon points="611.0,396.0 773.0,302.0" fill="none" stroke="#3a3a3a" stroke-width="0.9" stroke-linejoin="round" /><line x1="846.6" y1="223.3" x2="966.4" y2="291.9" stroke="#3a3a3a" stroke-width="0.9" stroke-dasharray="1 1"/></svg>
</body></html>
